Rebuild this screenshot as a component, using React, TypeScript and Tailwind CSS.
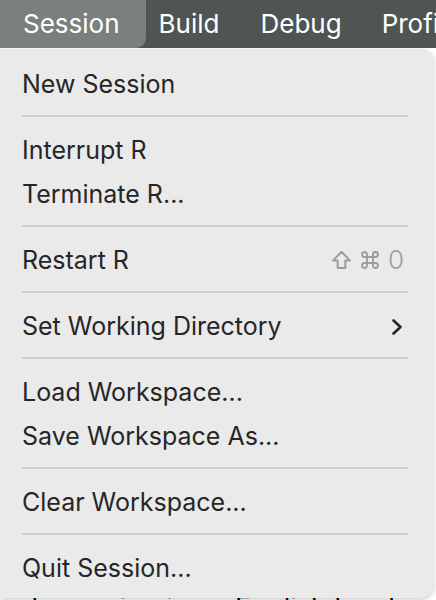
import React from 'react';

type Item =
  | { kind: 'item'; label: string; shortcut?: boolean; submenu?: boolean }
  | { kind: 'sep' };

const items: Item[] = [
  { kind: 'item', label: 'New Session' },
  { kind: 'sep' },
  { kind: 'item', label: 'Interrupt R' },
  { kind: 'item', label: 'Terminate R...' },
  { kind: 'sep' },
  { kind: 'item', label: 'Restart R', shortcut: true },
  { kind: 'sep' },
  { kind: 'item', label: 'Set Working Directory', submenu: true },
  { kind: 'sep' },
  { kind: 'item', label: 'Load Workspace...' },
  { kind: 'item', label: 'Save Workspace As...' },
  { kind: 'sep' },
  { kind: 'item', label: 'Clear Workspace...' },
  { kind: 'sep' },
  { kind: 'item', label: 'Quit Session...' },
];

function Chevron() {
  return (
    <svg width="14" height="18" viewBox="0 0 14 18" fill="none">
      <path d="M3.5 2.5 L10.5 9 L3.5 15.5" stroke="#262626" strokeWidth="2.6" strokeLinecap="round" strokeLinejoin="round" />
    </svg>
  );
}

function ShiftIcon() {
  return (
    <svg width="21" height="20" viewBox="0 0 21 20" fill="none">
      <path
        d="M10.5 1.8 L19 10.6 H14.3 V18 H6.7 V10.6 H2 Z"
        stroke="#9d9d9d"
        strokeWidth="2"
        strokeLinejoin="round"
      />
    </svg>
  );
}

function CmdIcon() {
  return (
    <svg width="20" height="20" viewBox="0 0 20 20" fill="none">
      <path
        d="M7 7 H13 V13 H7 Z M7 7 V4.5 A2.5 2.5 0 1 0 4.5 7 Z M13 7 H15.5 A2.5 2.5 0 1 0 13 4.5 Z M13 13 V15.5 A2.5 2.5 0 1 0 15.5 13 Z M7 13 H4.5 A2.5 2.5 0 1 0 7 15.5 Z"
        stroke="#9d9d9d"
        strokeWidth="1.9"
        strokeLinejoin="round"
      />
    </svg>
  );
}

export default function App() {
  return (
    <div className="relative w-[436px] h-[600px] overflow-hidden bg-white font-['Inter','Liberation_Sans',sans-serif]">
      {/* menu bar */}
      <div className="flex h-[48px] bg-[#4f5553] text-white text-[26px] leading-none whitespace-nowrap">
        <div className="flex items-center pl-[23px] pr-[26px] bg-[#7a807e] rounded-br-[10px]">Session</div>
        <div className="flex items-center pl-[13px] pr-[41px]">Build</div>
        <div className="flex items-center pr-[40px]">Debug</div>
        <div className="flex items-center">Profile</div>
      </div>

      {/* page behind the menu */}
      <div className="pt-[545px] text-black text-[27px] leading-none whitespace-nowrap -ml-[10px]">
        code running in an English locale
      </div>

      {/* dropdown */}
      <div className="absolute top-[49px] left-0 w-[434px] h-[549px] bg-[#eaeaea] rounded-tr-[12px] rounded-br-[14px] shadow-[0_2px_5px_rgba(0,0,0,0.2)] pt-[12px] text-[#262626] text-[25px]">
        {items.map((it, i) =>
          it.kind === 'sep' ? (
            <div key={i} className="h-[22px] flex items-center px-[22px]">
              <div className="h-[2px] w-[386px] bg-[#cfcfcf]" />
            </div>
          ) : (
            <div key={i} className="h-[44px] pt-[3px] flex items-center justify-between pl-[22px] pr-[30px]">
              <span>{it.label}</span>
              {it.shortcut && (
                <span className="flex items-center gap-[8px] text-[#9d9d9d] -mt-[2px]">
                  <ShiftIcon />
                  <CmdIcon />
                  <span className="font-light text-[26px] leading-none">0</span>
                </span>
              )}
              {it.submenu && <Chevron />}
            </div>
          )
        )}
      </div>
    </div>
  );
}
